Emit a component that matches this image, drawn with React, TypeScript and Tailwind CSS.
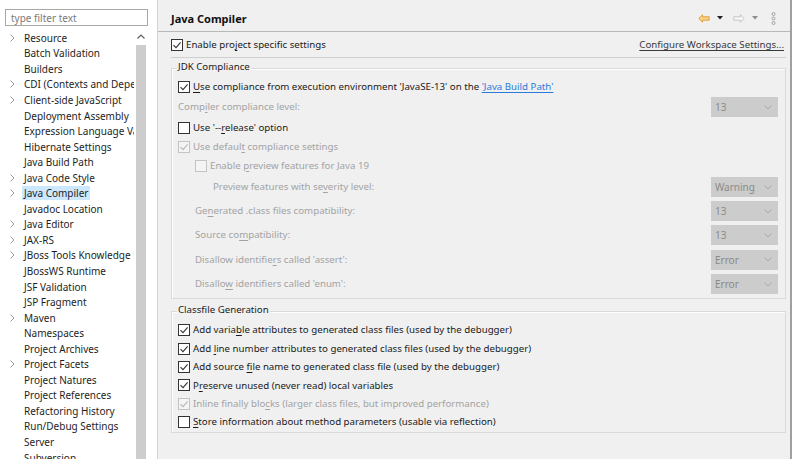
import type { ReactNode } from "react";

const tree: { label: string; arrow?: boolean; selected?: boolean }[] = [
  { label: "Resource", arrow: true },
  { label: "Batch Validation" },
  { label: "Builders" },
  { label: "CDI (Contexts and Dependency Injection)", arrow: true },
  { label: "Client-side JavaScript", arrow: true },
  { label: "Deployment Assembly" },
  { label: "Expression Language Validation" },
  { label: "Hibernate Settings" },
  { label: "Java Build Path" },
  { label: "Java Code Style", arrow: true },
  { label: "Java Compiler", arrow: true, selected: true },
  { label: "Javadoc Location" },
  { label: "Java Editor", arrow: true },
  { label: "JAX-RS", arrow: true },
  { label: "JBoss Tools Knowledge Base", arrow: true },
  { label: "JBossWS Runtime" },
  { label: "JSF Validation" },
  { label: "JSP Fragment" },
  { label: "Maven", arrow: true },
  { label: "Namespaces" },
  { label: "Project Archives" },
  { label: "Project Facets", arrow: true },
  { label: "Project Natures" },
  { label: "Project References" },
  { label: "Refactoring History" },
  { label: "Run/Debug Settings" },
  { label: "Server" },
  { label: "Subversion" },
];

function M({ children }: { children: ReactNode }) {
  return <span className="underline underline-offset-[2px]">{children}</span>;
}

function Check({
  checked,
  disabled,
  children,
}: {
  checked?: boolean;
  disabled?: boolean;
  children: ReactNode;
}) {
  return (
    <div className="flex items-center gap-[3px]">
      <span
        className={
          "flex h-[12px] w-[12px] shrink-0 items-center justify-center border " +
          (disabled ? "border-[#c4c4c4] bg-[#f4f4f4]" : "border-[#333333] bg-white")
        }
      >
        {checked && (
          <svg width="10" height="10" viewBox="0 0 10 10">
            <path
              d="M1.5 5.2 L4 7.6 L8.6 2.4"
              fill="none"
              stroke={disabled ? "#b8b8b8" : "#333333"}
              strokeWidth="1.1"
            />
          </svg>
        )}
      </span>
      <span className={"whitespace-nowrap " + (disabled ? "text-[#a3a3a3]" : "text-[#1a1a1a]")}>
        {children}
      </span>
    </div>
  );
}

function Combo({ value }: { value: string }) {
  return (
    <div className="flex h-[20px] w-[67px] items-center justify-between bg-[#cccccc] pl-[4px] pr-[6px] text-[10px] text-[#8a8a8a]">
      <span>{value}</span>
      <svg width="8" height="5" viewBox="0 0 8 5">
        <path d="M0.5 0.5 L4 4 L7.5 0.5" fill="none" stroke="#a9a9a9" strokeWidth="1" />
      </svg>
    </div>
  );
}

function Row({ h, indent, label, value }: { h: string; indent: string; label: ReactNode; value: string }) {
  return (
    <div className={`flex items-center justify-between pr-[7px] ${h}`}>
      <span className={`text-[#a3a3a3] ${indent}`}>{label}</span>
      <Combo value={value} />
    </div>
  );
}

function Group({ title, className, children }: { title: string; className: string; children: ReactNode }) {
  return (
    <div className={`relative ml-[13px] mr-[4px] border border-[#dadada] shadow-[inset_1px_1px_0_#ffffff] ${className}`}>
      <span className="absolute -top-[7px] left-[5px] bg-[#f0f0f0] px-[1px] text-[#1a1a1a]">{title}</span>
      {children}
    </div>
  );
}

export default function App() {
  return (
    <div className="flex h-[459px] w-[798px] overflow-hidden bg-white font-['Noto_Sans',sans-serif] text-[10px] leading-none">
      {/* left tree */}
      <aside className="flex w-[157px] flex-col">
        <div className="ml-[5px] mt-[9px] flex h-[17px] w-[143px] items-center border border-[#a8a8a8] pl-[5px] text-[#7a7a7a]">
          type filter text
        </div>
        <div className="mt-[4px] flex min-h-0 flex-1">
          <ul className="w-[134px] overflow-hidden">
            {tree.map((t) => (
              <li key={t.label} className="flex h-[15.55px] items-center whitespace-nowrap">
                <span className="flex w-[22px] shrink-0 justify-center pl-[3px]">
                  {t.arrow && (
                    <svg width="5" height="8" viewBox="0 0 5 8">
                      <path d="M0.5 0.5 L4 4 L0.5 7.5" fill="none" stroke="#9a9a9a" strokeWidth="1" />
                    </svg>
                  )}
                </span>
                <span
                  className={
                    "shrink-0 px-[2px] py-[2px] text-[#1e1e1e] " + (t.selected ? "bg-[#cce8ff]" : "")
                  }
                >
                  {t.label}
                </span>
              </li>
            ))}
          </ul>
          <div className="flex w-[14px] flex-col items-center">
            <svg className="mt-[4px]" width="8" height="5" viewBox="0 0 8 5">
              <path d="M0.5 4.5 L4 1 L7.5 4.5" fill="none" stroke="#606060" strokeWidth="1.2" />
            </svg>
            <div className="mt-[6px] w-[10px] flex-1 bg-[#cdcdcd]" />
          </div>
        </div>
      </aside>
      <div className="w-px bg-[#d4d4d4]" />

      {/* right page */}
      <main className="flex w-[632px] flex-col bg-[#f0f0f0] text-[9.7px] text-[#1a1a1a]">
        <header className="flex h-[32px] items-center justify-between border-b border-[#b9b9b9] pl-[13px] pr-[14px] pt-[5px]">
          <h1 className="text-[11px] font-bold text-[#111]">Java Compiler</h1>
          <div className="flex items-center gap-[7px]">
            <svg width="12" height="9" viewBox="0 0 12 9">
              <path d="M0.8 4.5 L4.6 0.8 V2.8 H11.2 V6.2 H4.6 V8.2 Z" fill="#f6d28c" stroke="#e2a13a" strokeWidth="1" />
            </svg>
            <svg width="6" height="4" viewBox="0 0 6 4">
              <path d="M0 0 H6 L3 3.5 Z" fill="#222" />
            </svg>
            <svg className="ml-[3px]" width="12" height="9" viewBox="0 0 12 9">
              <path d="M11.2 4.5 L7.4 0.8 V2.8 H0.8 V6.2 H7.4 V8.2 Z" fill="#fafafa" stroke="#c4c4c4" strokeWidth="1" />
            </svg>
            <svg width="6" height="4" viewBox="0 0 6 4">
              <path d="M0 0 H6 L3 3.5 Z" fill="#8c8c8c" />
            </svg>
            <svg className="ml-[6px]" width="5" height="13" viewBox="0 0 5 13">
              <circle cx="2.5" cy="2" r="1.5" fill="none" stroke="#9a9a9a" strokeWidth="0.9" />
              <circle cx="2.5" cy="6.5" r="1.5" fill="none" stroke="#9a9a9a" strokeWidth="0.9" />
              <circle cx="2.5" cy="11" r="1.5" fill="none" stroke="#9a9a9a" strokeWidth="0.9" />
            </svg>
          </div>
        </header>

        <div className="flex h-[25px] items-center justify-between pl-[13px] pr-[6px] pt-[1px]">
          <Check checked>
            Enable pro<M>j</M>ect specific settings
          </Check>
          <span className="text-[#3a3a3a] underline underline-offset-[2px]">Configure Workspace Settings...</span>
        </div>
        <div className="ml-[13px] mr-[4px] h-[2px] border-t border-[#cfcfcf] border-b-white" />

        <Group title="JDK Compliance" className="mt-[9px] h-[231px] pl-[6px] pt-[9px]">
          <div className="flex h-[18px] items-center">
            <Check checked>
              <M>U</M>se compliance from execution environment 'JavaSE-13' on the{" "}
              <span className="text-[#2a7ad9] underline underline-offset-[2px]">'Java Build Path'</span>
            </Check>
          </div>
          <Row h="h-[22px]" indent="" label={<>Comp<M>i</M>ler compliance level:</>} value="13" />
          <div className="flex h-[20px] items-center">
            <Check>
              Use '--<M>r</M>elease' option
            </Check>
          </div>
          <div className="flex h-[18px] items-center">
            <Check checked disabled>
              Use defaul<M>t</M> compliance settings
            </Check>
          </div>
          <div className="flex h-[19px] items-center pl-[17px]">
            <Check disabled>
              Enable <M>p</M>review features for Java 19
            </Check>
          </div>
          <Row h="h-[24px]" indent="pl-[35px]" label={<>Preview features with se<M>v</M>erity level:</>} value="Warning" />
          <Row h="h-[24px]" indent="pl-[17px]" label={<>Ge<M>n</M>erated .class files compatibility:</>} value="13" />
          <Row h="h-[24px]" indent="pl-[17px]" label={<>Source co<M>m</M>patibility:</>} value="13" />
          <Row h="h-[25px]" indent="pl-[17px]" label={<>Disallow identifie<M>r</M>s called 'assert':</>} value="Error" />
          <Row h="h-[24px]" indent="pl-[17px]" label={<>Disallo<M>w</M> identifiers called 'enum':</>} value="Error" />
        </Group>

        <Group title="Classfile Generation" className="mt-[12px] h-[122px] pl-[6px] pt-[9px]">
          <div className="flex h-[18.4px] items-center">
            <Check checked>
              Add varia<M>b</M>le attributes to generated class files (used by the debugger)
            </Check>
          </div>
          <div className="flex h-[18.4px] items-center">
            <Check checked>
              Add <M>l</M>ine number attributes to generated class files (used by the debugger)
            </Check>
          </div>
          <div className="flex h-[18.4px] items-center">
            <Check checked>
              Add source <M>f</M>ile name to generated class file (used by the debugger)
            </Check>
          </div>
          <div className="flex h-[18.4px] items-center">
            <Check checked>
              P<M>r</M>eserve unused (never read) local variables
            </Check>
          </div>
          <div className="flex h-[18.4px] items-center">
            <Check checked disabled>
              Inline finally blo<M>c</M>ks (larger class files, but improved performance)
            </Check>
          </div>
          <div className="flex h-[18.4px] items-center">
            <Check>
              <M>S</M>tore information about method parameters (usable via reflection)
            </Check>
          </div>
        </Group>
      </main>

      <div className="w-[2px] bg-[#a0a0a0]" />
      <div className="flex-1 bg-white" />
    </div>
  );
}
